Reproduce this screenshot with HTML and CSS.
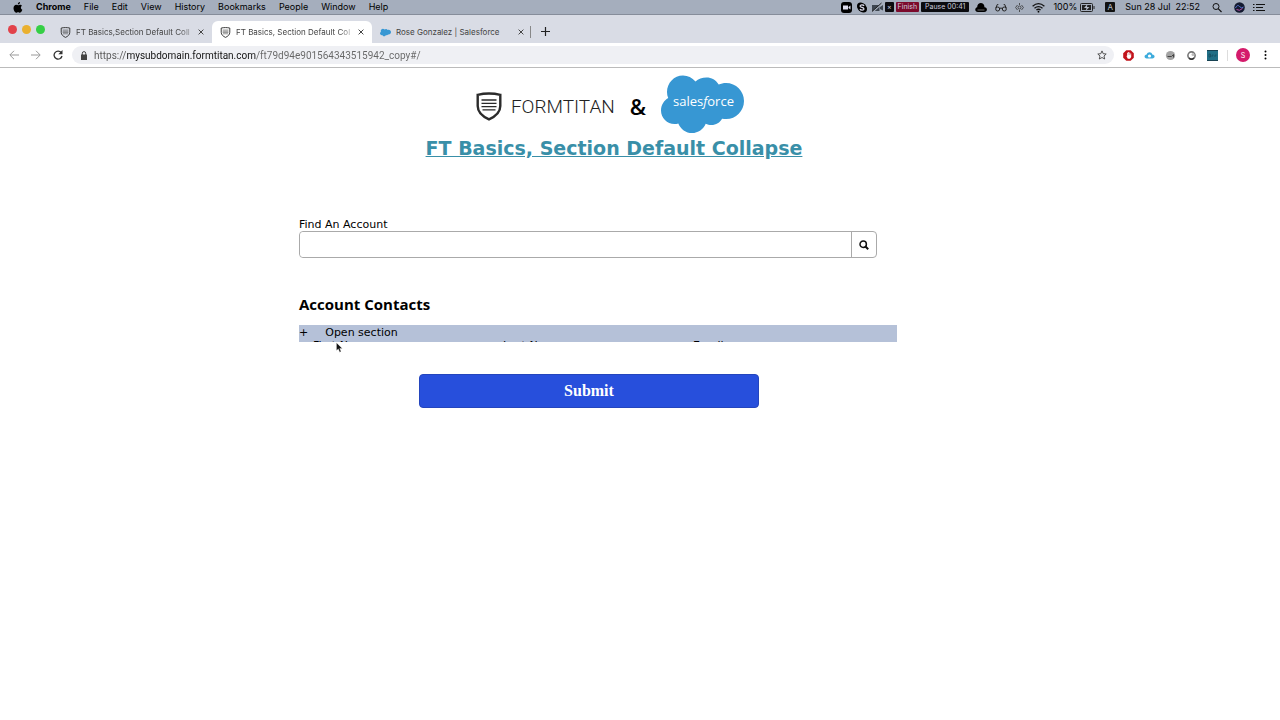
FILE: index.html
```html
<!DOCTYPE html>
<html lang="en">
    <head>
    <meta charset="utf-8">
    <title>FT Basics, Section Default Collapse</title>
    <link rel="stylesheet" href="styles.css">
    </head>
    <body>

    <!-- Shapes used more than once -->
    <svg class="defs" aria-hidden="true">
        <symbol id="shield" viewBox="0 0 26 29">
            <path d="M13 1.500C9 1.500 5 2 1.700 2.800V14c0 6.500 5 10.500 11.300 13.400C19.300 24.500 24.300 20.500 24.300 14V2.800C21 2 17 1.500 13 1.500Z" fill="none" stroke="#2b2b2b" stroke-width="2.400"/>
            <path d="M5.500 8h15M5.500 11.300h15M5.500 14.600h15M6.500 17.900h13" stroke="#2b2b2b" stroke-width="1.300"/>
        </symbol>
        <symbol id="cloud" viewBox="0 0 83 58">
            <path fill="#3797d3" d="M34.500 6.500C31 2.500 27 .5 22 .5 13 .5 6 8 6 17c0 2.200.4 4.200 1.200 6C3 25.500 0 30 0 35.500 0 43 6 49 13.500 49c1.400 0 2.600-.2 3.800-.6C19.500 54 25 58 31 58c6.200 0 11.500-3.800 13.700-9.300 1.800.9 3.600 1.300 5.800 1.300 4.500 0 8.500-2.500 10.600-6.300 1.400.3 2.700.4 4.100.4C75 44 83 36 83 26S75 8 65 8c-2.700 0-5 .5-7.300 1.600C55 5 50.500 2.500 45.500 2.500c-4.300 0-8.200 1.500-11 4z"/>
        </symbol>
        <symbol id="close" viewBox="0 0 6 6">
            <path d="M.6.6l4.800 4.800M5.400.6L.6 5.400" stroke="#444" fill="none"/>
        </symbol>
    </svg>

    <header class="menubar">
        <nav class="menus">
            <svg class="apple" viewBox="0 0 10 11"><path d="M7 .1C7.100 1.300 6 2.700 4.800 2.600 4.700 1.400 5.800.2 7 .1zM8.900 3.800C7.300 4.900 7.600 7 9.300 7.800 8.900 9 8 10.700 7 10.700c-.8 0-1-.5-1.900-.5s-1.200.5-1.900.5C1.900 10.700.5 8.300.5 6.200c0-2.200 1.400-3.400 2.700-3.400.8 0 1.500.5 2 .5s1.300-.6 2.200-.6c.6 0 1.200.4 1.500 1.100z"/></svg>
            <b>Chrome</b>
            <span>File</span>
            <span>Edit</span>
            <span>View</span>
            <span>History</span>
            <span>Bookmarks</span>
            <span>People</span>
            <span>Window</span>
            <span>Help</span>
        </nav>
        <div class="status">
            <svg width="11" height="11" viewBox="0 0 11 11"><rect width="11" height="11" rx="3"/><path d="M2 3.500h5v4H2zM7.500 5l2-1.500v4l-2-1.500z" fill="#dde"/></svg>
            <svg width="10" height="11" viewBox="0 0 10 11"><circle cx="3.500" cy="4" r="3.500"/><circle cx="6.500" cy="7" r="3.500"/><circle cx="5" cy="5.500" r="4.300"/><path d="M7 4C6.500 2.500 3 2.600 3.100 4.200 3.200 5.800 7 5 7 6.900 7 8.500 3.400 8.400 3 7" fill="none" stroke="#dde" stroke-width="1.200"/></svg>
            <svg width="11" height="11" viewBox="0 0 11 11"><path d="M0 3h7.500v6H0zM8 5l3-2v5.500L8 7z" fill="#3e4650"/><path d="M0 10.500L10 1.500" stroke="#a4adbc" stroke-width="1.500"/><path d="M0 9.500L9.500 1" stroke="#222"/></svg>
            <div class="recorder">
                <span class="chip">×</span>
                <span class="chip finish">Finish</span>
                <span class="chip pause">Pause 00:41</span>
            </div>
            <svg width="12" height="11" viewBox="0 0 12 11"><path d="M3 10C-.5 10-.5 5.800 2.200 5.200 2-.2 9.500-.5 9.500 5.200c3.500.2 3 4.800-.3 4.800z"/><path d="M2.500 8h7" stroke="#666"/></svg>
            <svg width="12" height="11" viewBox="0 0 12 11"><g fill="none" stroke="#222"><circle cx="2.700" cy="7" r="2"/><circle cx="9.300" cy="7" r="2"/><path d="M4.700 6.500q1.300-1 2.600 0M.8 6l1.500-3.500h1M11.200 6L9.700 2.500h-1"/></g></svg>
            <svg width="9" height="11" viewBox="0 0 9 11"><g fill="none" stroke="#333" stroke-width=".8"><circle cx="4.500" cy="5.500" r="1.500"/><path d="M2.500 3L.6 5.500 2.500 8M6.500 3l1.900 2.500L6.500 8M4.500 1v2M4.500 8v2"/></g></svg>
            <svg width="13" height="11" viewBox="0 0 13 11"><g fill="none" stroke="#111" stroke-width="1.300"><path d="M.6 4.200q5.900-5 11.800 0M2.500 6.200q4-3.300 8 0M4.400 8.100q2.100-1.700 4.200 0"/></g><circle cx="6.500" cy="9.700" r=".9"/></svg>
            <span class="battery">100%
                <svg width="15" height="9" viewBox="0 0 15 9"><rect x=".5" y=".5" width="12" height="8" rx="1" fill="none" stroke="#222"/><path d="M2 2h9v5H2z" fill="#222"/><path d="M14 3v3" stroke="#222"/><path d="M7.500 1L4 5h2.500L5.500 8 9.500 4H7z" fill="#b4bcc9"/></svg>
            </span>
            <span class="lang">A</span>
            <time class="clock"><span>Sun 28 Jul</span><span>22:52</span></time>
            <svg class="find" width="10" height="11" viewBox="0 0 10 11"><circle cx="4" cy="4.500" r="3" fill="none" stroke="#111"/><path d="M6.200 6.700L9.500 10" stroke="#111" stroke-width="1.200"/></svg>
            <svg width="11" height="11" viewBox="0 0 11 11"><circle cx="5.500" cy="5.500" r="5.300" fill="#141a30"/><path d="M1.500 6q2-4 4-1.500T9.500 5" fill="none" stroke="#5778d4"/><path d="M2.500 7.500q3 2 6-1" fill="none" stroke="#b94ea4"/></svg>
            <svg width="12" height="11" viewBox="0 0 12 11"><path d="M0 2.500h1.500M3 2.500h9M0 5.500h1.500M3 5.500h7M0 8.500h1.500M3 8.500h9" stroke="#111" stroke-width="1.200"/></svg>
        </div>
    </header>

    <div class="tabstrip">
        <div class="lights">
            <span class="light red"></span>
            <span class="light yellow"></span>
            <span class="light green"></span>
        </div>
        <div class="tab">
            <svg class="favicon"><use href="#shield"/></svg>
            <span class="tab-title">FT Basics,Section Default Coll</span>
            <button class="tab-close" aria-label="Close tab"><svg><use href="#close"/></svg></button>
        </div>
        <div class="tab active">
            <svg class="favicon"><use href="#shield"/></svg>
            <span class="tab-title">FT Basics, Section Default Col</span>
            <button class="tab-close" aria-label="Close tab"><svg><use href="#close"/></svg></button>
        </div>
        <div class="tab last">
            <svg class="favicon"><use href="#cloud"/></svg>
            <span class="tab-title">Rose Gonzalez | Salesforce</span>
            <button class="tab-close" aria-label="Close tab"><svg><use href="#close"/></svg></button>
        </div>
        <button class="new-tab" aria-label="New tab"><svg width="9" height="9" viewBox="0 0 9 9"><path d="M4.500 0v9M0 4.500h9" stroke="#222" stroke-width="1.200"/></svg></button>
    </div>

    <div class="toolbar">
        <div class="history">
            <button aria-label="Back"><svg width="10" height="10" viewBox="0 0 10 10"><path d="M10 5H1M5 .8L.8 5 5 9.200" fill="none" stroke="#999"/></svg></button>
            <button aria-label="Forward"><svg width="10" height="10" viewBox="0 0 10 10"><path d="M0 5h9M5 .8L9.200 5 5 9.200" fill="none" stroke="#999"/></svg></button>
            <button aria-label="Reload"><svg width="10" height="10" viewBox="0 0 10 10"><path d="M8.300 2.700A4 4 0 1 0 9 6" fill="none" stroke="#333" stroke-width="1.300"/><path d="M9.500 0v4.200H5.300z" fill="#333"/></svg></button>
        </div>
        <div class="omnibox">
            <svg width="6" height="9" viewBox="0 0 6 9"><path d="M0 3.500h6V9H0z" fill="#444"/><path d="M1.300 4V2.300a1.700 1.700 0 0 1 3.400 0V4" fill="none" stroke="#444"/></svg>
            <input class="url" type="text" aria-label="Address" value="https://mysubdomain.formtitan.com/ft79d94e901564343515942_copy#/">
            <button aria-label="Bookmark"><svg width="10" height="10" viewBox="0 0 10 10"><path d="M5 .9l1.200 2.800 3 .3L7 6l.7 3L5 7.500 2.300 9 3 6 .8 4l3-.3z" fill="none" stroke="#444" stroke-width=".9"/></svg></button>
        </div>
        <div class="extensions">
            <svg viewBox="0 0 11 11"><path d="M3.300.2h4.400l3.100 3.100v4.400l-3.100 3.100H3.300L.2 7.700V3.300z" fill="#c2131b"/><path d="M3.200 5.500l.9.700V2.800h.8V5h.3V2h.8v3h.3V2.600h.8V5.200h.3V3.600h.8V7L7 8.800H4.800z" fill="#fff"/></svg>
            <svg viewBox="0 0 11 11"><path d="M2.700 8.500c-3-.3-2.700-3.700 0-3.900C3.500 1.400 7.600 1.500 8.300 4.400c3 .2 3.100 3.900 0 4.100z" fill="#3cabdc"/><circle cx="5.500" cy="6" r="1.600" fill="#fff"/></svg>
            <svg viewBox="0 0 11 11"><circle cx="5.500" cy="5.500" r="4.600" fill="#a3a3a3"/><path d="M2.500 6.500h4l2-2v3" fill="none" stroke="#444"/></svg>
            <svg viewBox="0 0 11 11"><circle cx="5.500" cy="5.500" r="3.600" fill="#fff" stroke="#777" stroke-width="1.600"/><path d="M8 8a3.600 3.600 0 0 1-5 .1" fill="none" stroke="#333" stroke-width="1.600"/><circle cx="7" cy="4.500" r="1.500" fill="#bbb"/></svg>
            <svg viewBox="0 0 11 11"><path d="M0 0h11v11H0z" fill="#216f86"/><path d="M0 .5h11M0 10.500h11" stroke="#174252"/><path d="M2 4h1.500v3H2zM5 7V5h1.500M8 7V5h1.500" fill="none" stroke="#174f60" stroke-width=".8"/></svg>
        </div>
        <button class="avatar">S</button>
        <button class="more" aria-label="More"><svg width="3" height="10" viewBox="0 0 3 10"><circle cx="1.500" cy="1.500" r="1"/><circle cx="1.500" cy="5" r="1"/><circle cx="1.500" cy="8.500" r="1"/></svg></button>
    </div>

    <main class="page">
        <div class="heading">
            <div class="logos">
                <div class="wordmark">
                    <svg class="shield"><use href="#shield"/></svg>
                    <span class="formtitan">FORMTITAN</span>
                    <span class="amp">&amp;</span>
                </div>
                <svg class="salesforce" viewBox="0 0 83 58">
                    <use href="#cloud"/>
                    <text x="12" y="31">sales<tspan font-style="italic">f</tspan>orce</text>
                </svg>
            </div>
            <h1>FT Basics, Section Default Collapse</h1>
        </div>

        <form class="form">
            <label for="account">Find An Account</label>
            <div class="lookup">
                <input id="account" type="text">
                <button type="button" aria-label="Search"><svg width="10" height="10" viewBox="0 0 10 10"><circle cx="4.200" cy="4.200" r="3.200" fill="none" stroke="#111" stroke-width="1.500"/><path d="M6.500 6.500L9.200 9.200" stroke="#111" stroke-width="2"/></svg></button>
            </div>

            <h2>Account Contacts</h2>
            <!-- Collapsed: only the toggle row is left open -->
            <div class="section">
                <button type="button" class="toggle" aria-expanded="false"><span>+</span><span>Open section</span></button>
                <table class="contacts">
                    <tr><th>First Name</th><th>Last Name</th><th>Email</th></tr>
                </table>
            </div>

            <button type="submit" class="submit">Submit</button>
        </form>
    </main>

    <svg class="pointer" viewBox="0 0 8 12"><path d="M.5.5v9L2.700 7.600 4.200 11.300 5.800 10.600 4.300 7H7.200z" fill="#111" stroke="#fff" stroke-width=".4"/></svg>

    </body>
</html>
```

FILE: styles.css
```css
* {
  box-sizing: border-box;
}

body {
  margin: 0;
  background-color: #fff;
  color: #000;
  font-family: "DejaVu Sans", sans-serif;
  font-size: 11px;
}

button {
  padding: 0;
  border: none;
  background: none;
  color: inherit;
  font: inherit;
  cursor: pointer;
}

svg {
  display: block;
  flex: none;
}

.defs {
  position: absolute;
  width: 0;
  height: 0;
}

/* Menu bar */
.menubar {
  display: flex;
  align-items: center;
  justify-content: space-between;
  height: 15px;
  padding: 0 15px 0 13px;
  background-color: #a5aebd;
  border-bottom: 1px solid #868d9a;
  font-family: Inter, sans-serif;
  font-size: 9px;
  line-height: 14px;
  white-space: nowrap;
}

.menus,
.status,
.recorder,
.battery,
.clock {
  display: flex;
  align-items: center;
}

.menus {
  gap: 13px;
}

.apple {
  width: 10px;
  height: 11px;
}

.status {
  gap: 8px;
}

.status > svg:nth-child(-n+2) {
  margin-right: -3px;
}

.recorder {
  gap: 2px;
  margin: 0 -2px 0 -6px;
}

.chip {
  height: 10px;
  padding: 0 2px;
  background-color: #0b0b0f;
  border-radius: 1px;
  color: #ccd;
  font-size: 7px;
  line-height: 10px;
}

.finish {
  background-color: #7c0a2c;
}

.pause {
  padding: 0 4px;
}

.battery {
  gap: 3px;
}

.lang {
  width: 10px;
  height: 10px;
  margin: 0 2px;
  background-color: #111;
  border-radius: 1px;
  color: #bcc4d0;
  font-size: 8px;
  line-height: 10px;
  text-align: center;
}

.clock {
  gap: 5px;
}

.find {
  margin: 0 4px;
}

/* Tabs */
.tabstrip {
  display: flex;
  align-items: flex-end;
  height: 28px;
  background-color: #d9dce5;
  font-family: Inter, sans-serif;
  font-size: 8px;
}

.lights {
  display: flex;
  gap: 5px;
  width: 52px;
  padding: 0 0 9px 8px;
}

.light {
  width: 9px;
  height: 9px;
  border-radius: 50%;
}

.red {
  background-color: #e2424a;
}

.yellow {
  background-color: #eab02f;
}

.green {
  background-color: #35cf45;
}

.tab {
  display: flex;
  align-items: center;
  width: 160px;
  height: 22px;
  padding: 0 8px;
  color: #444;
}

.active {
  background-color: #fff;
  border-radius: 6px 6px 0 0;
}

.favicon {
  width: 11px;
  height: 11px;
  margin-right: 5px;
}

.tab-title {
  flex: 1;
  white-space: nowrap;
  mask-image: linear-gradient(90deg, #000 85%, transparent 99%);
}

.tab-close svg {
  width: 6px;
  height: 6px;
}

.last {
  position: relative;
}

.last .tab-title {
  mask-image: none;
}

.last::after {
  content: "";
  position: absolute;
  right: 1px;
  width: 1px;
  height: 12px;
  background-color: #888;
}

.new-tab {
  margin: 0 0 7px 9px;
}

/* Toolbar */
.toolbar {
  display: flex;
  align-items: center;
  height: 25px;
  padding: 0 13px 0 9px;
  border-bottom: 1px solid #bbb;
  font-family: Inter, sans-serif;
}

.history {
  display: flex;
  gap: 12px;
  margin-right: 9px;
}

.omnibox {
  display: flex;
  align-items: center;
  flex: 1;
  height: 18px;
  padding: 0 7px 0 9px;
  background-color: #eff0f4;
  border-radius: 9px;
}

/* Host name is darker than the rest of the address */
.url {
  flex: 1;
  margin-left: 7px;
  padding: 0;
  border: none;
  outline: none;
  background: linear-gradient(90deg, #555 33px, #111 33px, #111 162px, #666 162px);
  background-clip: text;
  color: transparent;
  font-family: Roboto, sans-serif;
  font-size: 10px;
}

.extensions {
  display: flex;
  gap: 10px;
  padding: 0 9px;
  border-right: 1px solid #ddd;
}

.extensions svg {
  width: 11px;
  height: 11px;
}

.avatar {
  width: 14px;
  height: 14px;
  margin: 0 14px 0 8px;
  background-color: #d41b6b;
  border-radius: 50%;
  color: #fff;
  font-size: 7px;
}

/* Page */
.page {
  max-width: 682px;
  margin: 0 auto;
}

.heading {
  display: flex;
  flex-direction: column;
  align-items: center;
  padding: 7px 52px 0 0;
}

.logos {
  display: flex;
  align-items: center;
  margin-right: 8px;
}

.wordmark {
  display: flex;
  align-items: center;
  padding-top: 4px;
}

.shield {
  width: 26px;
  height: 29px;
  margin-right: 9px;
}

.formtitan {
  color: #222;
  font-family: Roboto, sans-serif;
  font-size: 19px;
  font-weight: 300;
}

.amp {
  margin: 0 15px;
  font-family: "Open Sans", sans-serif;
  font-size: 22px;
  font-weight: 600;
  line-height: 30px;
}

.salesforce {
  width: 83px;
  height: 58px;
  fill: #fff;
  font-family: "Open Sans", sans-serif;
  font-size: 13px;
}

h1 {
  margin: 3px 0 0;
  color: #398fa8;
  font-size: 19px;
  line-height: 24px;
  text-decoration: underline;
}

.form {
  display: flex;
  flex-direction: column;
  margin-top: 58px;
  padding-right: 84px;
}

label {
  line-height: 13px;
}

.lookup {
  display: flex;
  height: 27px;
  margin-right: 20px;
  border: 1px solid #aaa;
  border-radius: 4px;
}

.lookup input {
  flex: 1;
  border: none;
  border-radius: 4px;
  outline: none;
}

.lookup button {
  display: flex;
  align-items: center;
  justify-content: center;
  width: 25px;
  border-left: 1px solid #aaa;
}

h2 {
  margin: 35px 0 10px;
  font-family: "Open Sans", sans-serif;
  font-size: 15px;
  line-height: 22px;
}

.section {
  height: 17px;
  overflow: hidden;
  background-color: #b5c1d8;
}

.toggle {
  display: flex;
  gap: 17px;
  width: 100%;
  line-height: 16px;
}

.contacts {
  width: 570px;
  margin-left: 14px;
  border-collapse: collapse;
  table-layout: fixed;
}

.contacts th {
  padding: 0;
  font-weight: normal;
  line-height: 9px;
  text-align: left;
}

.submit {
  width: 340px;
  height: 34px;
  margin: 32px 0 0 120px;
  background-color: #274fdc;
  border: 1px solid #2445bd;
  border-radius: 4px;
  color: #fff;
  font-family: "Liberation Serif", serif;
  font-size: 16px;
  font-weight: bold;
}

/* Mouse pointer over the section */
.pointer {
  position: absolute;
  left: 336px;
  top: 342px;
  width: 7px;
  height: 11px;
}
```
